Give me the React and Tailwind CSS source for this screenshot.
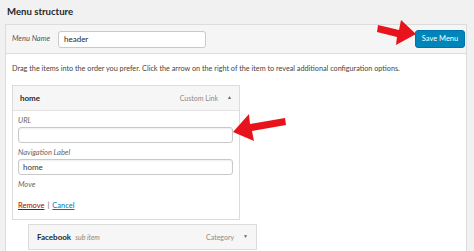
import React from 'react';

function Field({ label, value }) {
  return (
    <div className="flex flex-col">
      <span className="italic text-[7.5px] text-[#666] leading-none h-[12px] flex items-center">{label}</span>
      <div className="h-[16px] w-[215px] rounded-[3px] border border-[#c9c9c9] bg-white shadow-[inset_0_1px_2px_rgba(0,0,0,0.07)] flex items-center px-[4px] text-[8px] text-[#32373c]">
        {value}
      </div>
    </div>
  );
}

export default function App() {
  return (
    <div className="w-[474px] h-[251px] bg-[#f1f1f1] overflow-hidden relative text-[#23282d] font-['Lato']">
      <div className="h-[24px] px-[7px] flex items-center text-[9.6px] font-bold">Menu structure</div>

      <div className="ml-[5px] w-[462px] h-[240px] border border-[#dcdcdc] bg-white flex flex-col">
        {/* menu name row */}
        <div className="h-[29px] shrink-0 bg-[#f5f5f5] border-b border-[#dcdcdc] flex items-center pl-[6px] pr-[1px]">
          <span className="italic text-[7.5px] text-[#555] w-[45px]">Menu Name</span>
          <div className="ml-[1px] h-[17px] w-[148px] rounded-[3px] border border-[#c9c9c9] bg-white flex items-center px-[5px] text-[8px]">
            header
          </div>
          <button className="ml-auto h-[18px] w-[50px] rounded-[3px] bg-[#0085ba] border border-[#0073aa] text-white text-[7.5px] flex items-center justify-center">
            Save Menu
          </button>
        </div>

        <div className="flex flex-col px-[6px]">
          <p className="h-[28px] flex items-center text-[7.25px] text-[#444] whitespace-nowrap mt-[1px]">
            Drag the items into the order you prefer. Click the arrow on the right of the item to reveal additional configuration options.
          </p>

          {/* open item */}
          <div className="mt-[2px] w-[228px] border border-[#dcdcdc] flex flex-col">
            <div className="h-[25px] bg-[#f6f6f6] border-b border-[#e2e2e2] flex items-center px-[7px]">
              <span className="text-[8px] font-bold">home</span>
              <span className="ml-auto text-[7px] text-[#8a8a8a]">Custom Link</span>
              <span className="ml-[9px] text-[5px] text-[#666]">▲</span>
            </div>
            <div className="flex flex-col px-[5px] pt-[4px] pb-[7px]">
              <Field label="URL" value="" />
              <div className="mt-[4px]">
                <Field label="Navigation Label" value="home" />
              </div>
              <span className="mt-[4px] italic text-[7.5px] text-[#666] h-[12px] flex items-center">Move</span>
              <div className="mt-[9px] text-[7.5px] h-[12px] flex items-center">
                <span className="text-[#a00] underline">Remove</span>
                <span className="mx-[3px] text-[#666]">|</span>
                <span className="text-[#0073aa] underline">Cancel</span>
              </div>
            </div>
          </div>

          {/* sub item */}
          <div className="mt-[4px] ml-[16px] w-[229px] h-[26px] border border-[#dcdcdc] bg-[#f6f6f6] flex items-center px-[8px]">
            <span className="text-[8px] font-bold">Facebook</span>
            <span className="ml-[4px] italic text-[7px] text-[#888]">sub item</span>
            <span className="ml-auto text-[7px] text-[#8a8a8a]">Category</span>
            <span className="ml-[9px] text-[5px] text-[#666]">▼</span>
          </div>
        </div>
      </div>

      {/* annotation arrows */}
      <svg className="absolute inset-0 pointer-events-none" width="474" height="251">
        <polygon fill="#e8141b" points="378,25 399,30 401,20 416,34 396,45 397,37 377,32" />
        <polygon fill="#e8141b" points="233,132 249,114 250,124 285,118 286,125 252,131 254,141" />
      </svg>
    </div>
  );
}
